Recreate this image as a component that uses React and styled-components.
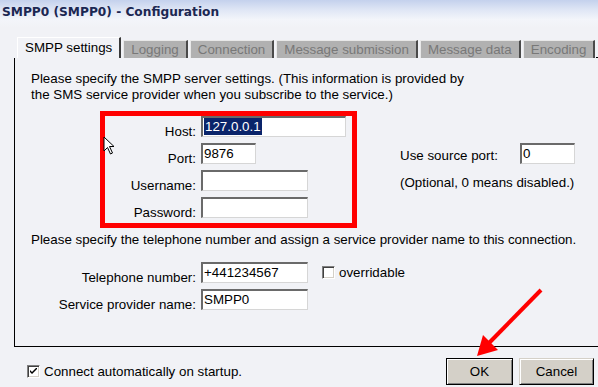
import React from "react";
import styled, { createGlobalStyle } from "styled-components";

const GlobalStyle = createGlobalStyle`
	html, body {
		margin: 0;
		padding: 0;
		background: #f1f2f6;
	}
`;

const Window = styled.div`
	position: relative;
	width: 598px;
	height: 387px;
	overflow: hidden;
	background: #f1f2f6;
	font-family: "Liberation Sans", Arial, sans-serif;
	font-size: 13.35px;
	color: #000;
`;

const TitleBar = styled.div`
	height: 28px;
	box-sizing: border-box;
	padding: 4px 0 0 2px;
	background: linear-gradient(#c4d1ed 0, #dfe6f5 35%, #f3f5fa 70%, #f1f2f6 100%);
	font-family: "DejaVu Sans", Verdana, sans-serif;
	font-weight: bold;
	font-size: 12.2px;
	line-height: 16px;
	color: #1b2752;
	white-space: nowrap;
`;

const Body = styled.div`
	padding-left: 14px;
`;

const TabStrip = styled.div`
	display: flex;
	align-items: flex-end;
	gap: 2px;
	margin-top: 9px;
	padding-left: 3px;
	height: 21px;
`;

const Tab = styled.div`
	box-sizing: border-box;
	height: ${p => (p.$active ? "21px" : "18px")};
	padding: 0 7px;
	line-height: ${p => (p.$active ? "20px" : "17px")};
	white-space: nowrap;
	background: ${p => (p.$active ? "#f1f2f6" : "#b1b1b1")};
	color: ${p => (p.$active ? "#000" : "#787878")};
	border-top: 1px solid ${p => (p.$active ? "#ffffff" : "#e8e8e8")};
	border-left: 1px solid ${p => (p.$active ? "#ffffff" : "#e8e8e8")};
	border-right: 2px solid ${p => (p.$active ? "#3a3a3a" : "#4a4a4a")};
`;

const TabFill = styled.div`
	flex: 1;
	border-bottom: 1px solid #000;
	margin-left: -1px;
`;

const Panel = styled.div`
	box-sizing: border-box;
	height: 289px;
	border-left: 1px solid #000;
	border-bottom: 1px solid #000;
	padding: 13px 0 0 16px;
`;

const Note = styled.p`
	margin: ${p => p.$mt || 0}px 0 0 0;
	line-height: 16px;
	white-space: nowrap;
`;

const ServerRow = styled.div`
	display: flex;
	align-items: flex-start;
	margin: 8px 0 0 69px;
`;

const Highlight = styled.div`
	border: 5px solid #ff0000;
	padding: 0 6px 5px 0;
`;

const FieldGrid = styled.div`
	display: grid;
	grid-template-columns: ${p => p.$cols};
	grid-auto-rows: 21px;
	row-gap: 6px;
	column-gap: 5px;
	margin-top: ${p => p.$mt || 0}px;
`;

const Label = styled.div`
	align-self: end;
	text-align: right;
	line-height: 11px;
	white-space: nowrap;
`;

const Field = styled.div`
	box-sizing: border-box;
	width: ${p => p.$w}px;
	height: 21px;
	background: #fff;
	border-style: solid;
	border-width: 2px 1px 1px 2px;
	border-color: #6a6a6a #d6d6d6 #d6d6d6 #6a6a6a;
	padding: 0 0 0 1px;
	line-height: 17px;
	white-space: nowrap;
	overflow: hidden;
`;

const Selected = styled.span`
	display: inline-block;
	background: #0a246a;
	color: #fff;
	line-height: 17px;
	padding: 0 1px;
`;

const SidePanel = styled.div`
	margin: 32px 0 0 43px;
	display: grid;
	grid-template-columns: 120px 55px;
	grid-auto-rows: 21px;
	row-gap: 6px;
`;

const SideLabel = styled.div`
	align-self: end;
	line-height: 16px;
	white-space: nowrap;
	grid-column: ${p => (p.$wide ? "1 / 3" : "auto")};
`;

const CheckRow = styled.label`
	display: flex;
	align-items: center;
	gap: ${p => p.$gap || 4}px;
	margin-left: ${p => p.$ml || 0}px;
	white-space: nowrap;
	line-height: 16px;
`;

const Box = styled.span`
	box-sizing: border-box;
	width: 13px;
	height: 13px;
	flex: none;
	background: #fff;
	border-style: solid;
	border-width: 1px;
	border-color: #808080 #ffffff #ffffff #808080;
	box-shadow: inset 1px 1px 0 #404040, inset -1px -1px 0 #d4d0c8;
	display: flex;
	align-items: center;
	justify-content: center;
`;

const Footer = styled.div`
	display: flex;
	align-items: center;
	padding: 11px 4px 0 13px;
`;

const Buttons = styled.div`
	display: flex;
	gap: 6px;
	margin-left: auto;
`;

const Button = styled.button`
	box-sizing: border-box;
	width: ${p => p.$w}px;
	height: 27px;
	padding: 0;
	font: inherit;
	color: #000;
	background: #d4d0c8;
	border: 1px solid ${p => (p.$default ? "#000" : "#d4d0c8")};
	border-right-color: #000;
	border-bottom-color: #000;
	box-shadow: inset 1px 1px 0 #ffffff, inset -1px -1px 0 #808080;
`;

const Overlay = styled.svg`
	position: absolute;
	left: 0;
	top: 0;
	pointer-events: none;
`;

const Check = ({ checked }) => (
	<Box>
		{checked && (
			<svg width="7" height="7" viewBox="0 0 7 7">
				<path d="M0 2 L0 4 L2 6 L7 1 L7 -1 L2 4 Z" fill="#000" />
			</svg>
		)}
	</Box>
);

const App = () => (
	<Window>
		<GlobalStyle />
		<TitleBar>SMPP0 (SMPP0) - Configuration</TitleBar>
		<Body>
			<TabStrip>
				<Tab $active>SMPP settings</Tab>
				<Tab>Logging</Tab>
				<Tab>Connection</Tab>
				<Tab>Message submission</Tab>
				<Tab>Message data</Tab>
				<Tab>Encoding</Tab>
				<TabFill />
			</TabStrip>
			<Panel>
				<Note>
					Please specify the SMPP server settings. (This information is provided by
					<br />
					the SMS service provider when you subscribe to the service.)
				</Note>
				<ServerRow>
					<Highlight>
						<FieldGrid $cols="91px auto">
							<Label>Host:</Label>
							<Field $w={145}>
								<Selected>127.0.0.1</Selected>
							</Field>
							<Label>Port:</Label>
							<Field $w={55}>9876</Field>
							<Label>Username:</Label>
							<Field $w={107} />
							<Label>Password:</Label>
							<Field $w={107} />
						</FieldGrid>
					</Highlight>
					<SidePanel>
						<SideLabel>Use source port:</SideLabel>
						<Field $w={55}>0</Field>
						<SideLabel $wide>(Optional, 0 means disabled.)</SideLabel>
					</SidePanel>
				</ServerRow>
				<Note $mt={4}>
					Please specify the telephone number and assign a service provider name to this connection.
				</Note>
				<FieldGrid $cols="165px 107px auto" $mt={14}>
					<Label>Telephone number:</Label>
					<Field $w={107}>+441234567</Field>
					<CheckRow $ml={9}>
						<Check />
						overridable
					</CheckRow>
					<Label>Service provider name:</Label>
					<Field $w={107}>SMPP0</Field>
				</FieldGrid>
			</Panel>
			<Footer>
				<CheckRow>
					<Check checked />
					Connect automatically on startup.
				</CheckRow>
				<Buttons>
					<Button $w={67} $default>OK</Button>
					<Button $w={75}>Cancel</Button>
				</Buttons>
			</Footer>
		</Body>
		<Overlay width="598" height="387">
			<path
				d="M104 137 L104 151 L107.5 147.5 L110.5 154 L112.5 153 L109.5 146.5 L114 146.5 Z"
				fill="#ffffff"
				stroke="#000"
				strokeWidth="1"
			/>
			<line x1="541" y1="290" x2="489" y2="343" stroke="#ff0000" strokeWidth="4" />
			<polygon points="477,356 483,335 498,350" fill="#ff0000" />
		</Overlay>
	</Window>
);

export default App;
